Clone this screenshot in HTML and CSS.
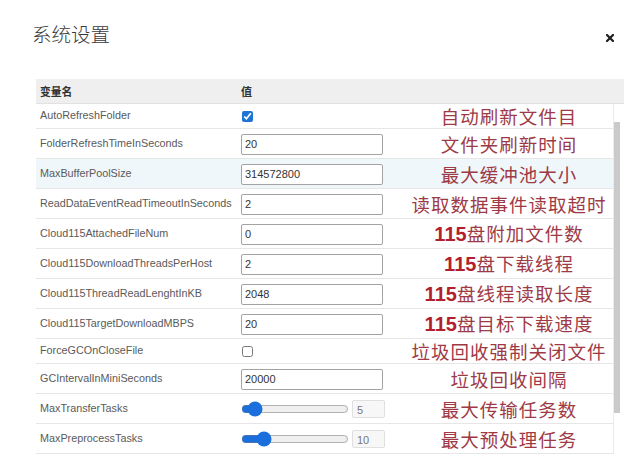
FILE: index.html
```html
<!DOCTYPE html>
<html lang="zh-CN">
<head>
    <meta charset="UTF-8">
    <meta name="viewport" content="width=device-width, initial-scale=1.0">
    <title>系统设置</title>
    <link rel="stylesheet" href="styles.css">
</head>
<body>
    <div class="dialog">
        <div class="dialog-head">
            <h1>系统设置</h1>
            <span class="close">
                <svg width="8" height="8" viewBox="0 0 8 8"><path d="M1 1L7 7M7 1L1 7" stroke="#1e1e1e" stroke-width="2.2" stroke-linecap="square"/></svg>
            </span>
        </div>

        <div class="settings">
            <div class="row head">
                <div class="name">变量名</div>
                <div class="value">值</div>
                <div class="note"></div>
            </div>
            <div class="body-wrap">
                <div class="rows">
                    <div class="row short">
                        <div class="name">AutoRefreshFolder</div>
                        <div class="value"><input type="checkbox" checked></div>
                        <div class="note">自动刷新文件目</div>
                    </div>
                    <div class="row">
                        <div class="name">FolderRefreshTimeInSeconds</div>
                        <div class="value"><input type="text" value="20"></div>
                        <div class="note">文件夹刷新时间</div>
                    </div>
                    <div class="row hover">
                        <div class="name">MaxBufferPoolSize</div>
                        <div class="value"><input type="text" value="314572800"></div>
                        <div class="note">最大缓冲池大小</div>
                    </div>
                    <div class="row">
                        <div class="name">ReadDataEventReadTimeoutInSeconds</div>
                        <div class="value"><input type="text" value="2"></div>
                        <div class="note">读取数据事件读取超时</div>
                    </div>
                    <div class="row">
                        <div class="name">Cloud115AttachedFileNum</div>
                        <div class="value"><input type="text" value="0"></div>
                        <div class="note"><b>115</b>盘附加文件数</div>
                    </div>
                    <div class="row">
                        <div class="name">Cloud115DownloadThreadsPerHost</div>
                        <div class="value"><input type="text" value="2"></div>
                        <div class="note"><b>115</b>盘下载线程</div>
                    </div>
                    <div class="row">
                        <div class="name">Cloud115ThreadReadLenghtInKB</div>
                        <div class="value"><input type="text" value="2048"></div>
                        <div class="note"><b>115</b>盘线程读取长度</div>
                    </div>
                    <div class="row">
                        <div class="name">Cloud115TargetDownloadMBPS</div>
                        <div class="value"><input type="text" value="20"></div>
                        <div class="note"><b>115</b>盘目标下载速度</div>
                    </div>
                    <div class="row short">
                        <div class="name">ForceGCOnCloseFile</div>
                        <div class="value"><input type="checkbox"></div>
                        <div class="note">垃圾回收强制关闭文件</div>
                    </div>
                    <div class="row">
                        <div class="name">GCIntervalInMiniSeconds</div>
                        <div class="value"><input type="text" value="20000"></div>
                        <div class="note">垃圾回收间隔</div>
                    </div>
                    <div class="row">
                        <div class="name">MaxTransferTasks</div>
                        <div class="value slider">
                            <input type="range" min="2" max="52" value="5">
                            <span class="num">5</span>
                        </div>
                        <div class="note">最大传输任务数</div>
                    </div>
                    <div class="row">
                        <div class="name">MaxPreprocessTasks</div>
                        <div class="value slider">
                            <input type="range" min="2" max="52" value="10">
                            <span class="num">10</span>
                        </div>
                        <div class="note">最大预处理任务</div>
                    </div>
                </div>
                <div class="scrollbar"><div class="thumb"></div></div>
            </div>
        </div>
    </div>
</body>
</html>
```

FILE: styles.css
```css
body {
    margin: 0;
    background: #fff;
    font-family: "Liberation Sans", Arial, "Noto Sans CJK SC", sans-serif;
    color: #5a5a5a;
}

.dialog {
    padding-left: 36px;
}

.dialog-head {
    display: flex;
    justify-content: space-between;
    align-items: center;
    height: 79px;
    padding-right: 9px;
}

.dialog-head h1 {
    margin: -12px 0 0 -4px;
    font-family: "Noto Sans CJK SC", sans-serif;
    font-size: 19.5px;
    font-weight: 300;
    color: #3a3a3a;
}

.close {
    display: flex;
    margin-top: -3px;
    margin-right: 1px;
}

.row {
    display: grid;
    grid-template-columns: 202px 147px 1fr;
    align-items: center;
    min-height: 29px;
    border-bottom: 1px solid #e6e6e6;
}

.row.short {
    min-height: 24px;
}

.row.hover {
    background: #eff7fa;
}

.row.head {
    min-height: 24px;
    background: #efefef;
    border-bottom: 1px solid #e2e2e2;
    font-family: "Noto Sans CJK SC", sans-serif;
    font-size: 11px;
    font-weight: 700;
    color: #333;
}

.name {
    padding-left: 4px;
    font-size: 10.8px;
    margin-top: -2px;
}

.head .name {
    margin-top: 0;
}

.value {
    padding-left: 3px;
    display: flex;
    align-items: center;
}

.value input[type="text"] {
    box-sizing: border-box;
    width: 142px;
    height: 21px;
    margin: 1px 0 0;
    padding: 0 3px;
    border: 1px solid #a3a3a3;
    border-radius: 2px;
    font-family: "Liberation Sans", Arial, sans-serif;
    font-size: 11px;
    color: #333;
}

.value input[type="checkbox"] {
    width: 11px;
    height: 11px;
    margin: 0 0 0 1px;
    accent-color: #1f73d2;
}

.slider input[type="range"] {
    width: 108px;
    height: 14px;
    margin: 0;
    accent-color: #1a6fdc;
}

.num {
    box-sizing: border-box;
    width: 33px;
    height: 18px;
    margin-left: 3px;
    padding: 3px 4px 0;
    border: 1px solid #e0e0e0;
    border-radius: 2px;
    background: #f7f7f7;
    font-size: 11px;
    color: #777;
}

.note {
    padding-left: 20px;
    text-align: center;
    white-space: nowrap;
    font-family: "Noto Sans CJK SC", serif;
    font-size: 18.5px;
    letter-spacing: 1px;
    line-height: 20px;
    color: #9e3a46;
}

.note b {
    font-family: "Liberation Sans", Arial, sans-serif;
    font-size: 20px;
    letter-spacing: 0;
    color: #b3202d;
}

.body-wrap {
    display: flex;
}

.rows {
    width: 578px;
}

.scrollbar {
    width: 10px;
    border-left: 1px solid #ececec;
}

.scrollbar .thumb {
    width: 6px;
    height: 291px;
    margin: 18px 0 0 0;
    background: #cacaca;
}
```
